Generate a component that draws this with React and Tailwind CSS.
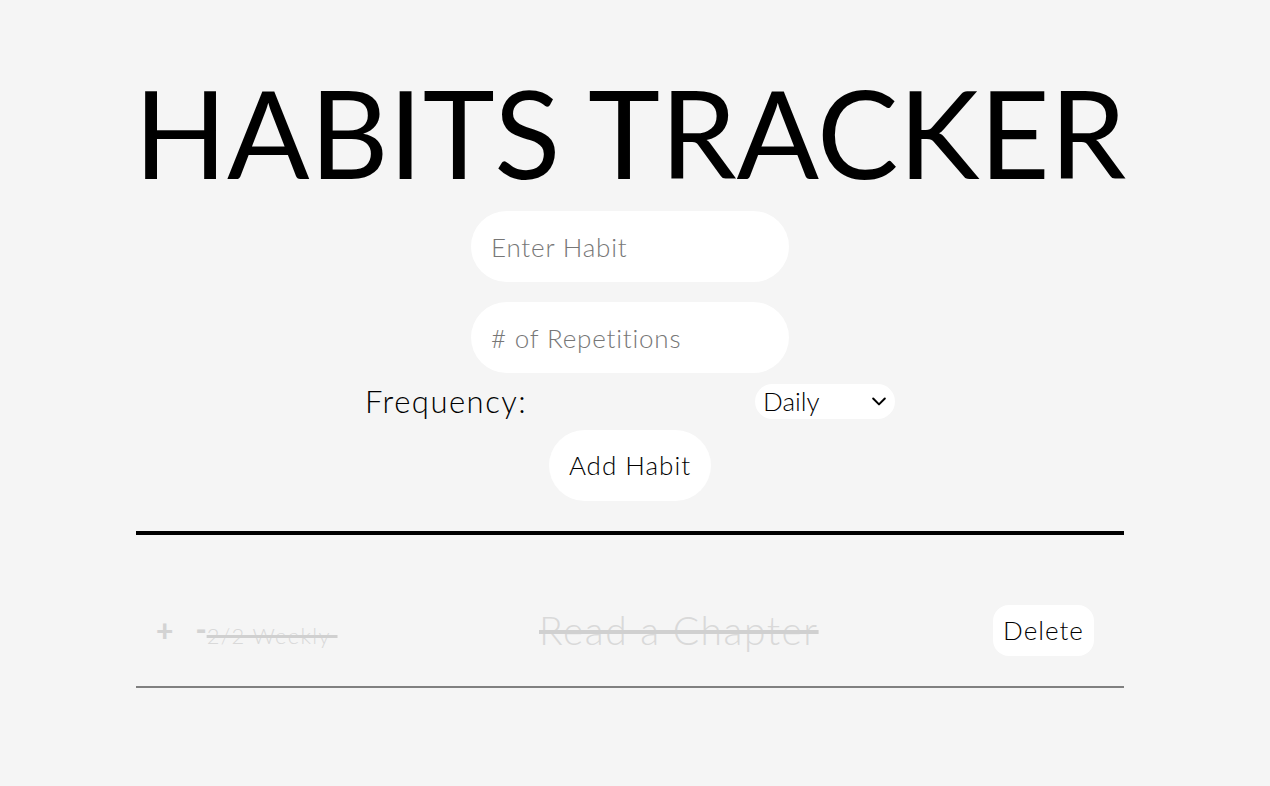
import React from "react";

export default function App() {
  const font = { fontFamily: "Lato, 'Liberation Sans', sans-serif" };
  return (
    <div className="min-h-screen w-full bg-[#f5f5f5] flex flex-col items-center pr-[10px]" style={font}>
      <div className="w-[988px] flex flex-col items-center">
        <h1 className="mt-[62px] text-[122px] leading-[140px] font-normal text-black text-center whitespace-nowrap tracking-[0px]">
          HABITS TRACKER
        </h1>
        <div className="mt-[9px] flex flex-col items-center gap-[20px]">
          <input
            className="w-[318px] h-[71px] rounded-full bg-white px-[20px] text-[26px] tracking-[0.8px] font-light text-black placeholder:text-[#777] outline-none"
            placeholder="Enter Habit"
          />
          <input
            className="w-[318px] h-[71px] rounded-full bg-white px-[20px] text-[26px] tracking-[0.8px] font-light text-black placeholder:text-[#777] outline-none"
            placeholder="# of Repetitions"
          />
        </div>
        <div className="mt-[5px] w-[530px] flex items-center justify-between">
          <span className="text-[31px] tracking-[1.5px] font-light text-black">Frequency:</span>
          <div className="w-[140px] h-[35px] rounded-full bg-white flex items-center justify-between pl-[8px] pr-[6px]">
            <span className="text-[26px] font-light text-black">Daily</span>
            <svg width="20" height="20" viewBox="0 0 24 24" fill="none" stroke="black" strokeWidth="2.4" strokeLinecap="round" strokeLinejoin="round">
              <path d="M5 9l7 7 7-7" />
            </svg>
          </div>
        </div>
        <button className="mt-[5px] w-[162px] h-[71px] rounded-full bg-white text-[26px] tracking-[1px] font-light text-black">
          Add Habit
        </button>
        <div className="mt-[30px] w-full h-[4px] bg-black" />
        <div className="w-full h-[151px] flex items-center pt-[40px]">
          <div className="w-[400px] flex items-center pl-[20px]">
            <span className="text-[30px] font-black text-[#d3d3d3] leading-none">+</span>
            <span className="ml-[22px] text-[30px] font-black text-[#d3d3d3] leading-none -mt-[2px]">-</span>
            <span className="text-[22px] tracking-[1.3px] font-light text-[#d9d9d9] line-through decoration-[3px] decoration-[#d0d0d0] mt-[10px] whitespace-pre">2/2 Weekly </span>
          </div>
          <div className="ml-[3px] w-[430px]">
            <span className="text-[39px] tracking-[1.5px] font-light text-[#d9d9d9] line-through decoration-[4px] decoration-[#d0d0d0]">
              Read a Chapter
            </span>
          </div>
          <button className="ml-auto mr-[30px] w-[101px] h-[51px] rounded-[16px] bg-white text-[26px] tracking-[1px] font-light text-black">
            Delete
          </button>
        </div>
        <div className="w-full h-[2px] bg-[#808080]" />
      </div>
    </div>
  );
}
